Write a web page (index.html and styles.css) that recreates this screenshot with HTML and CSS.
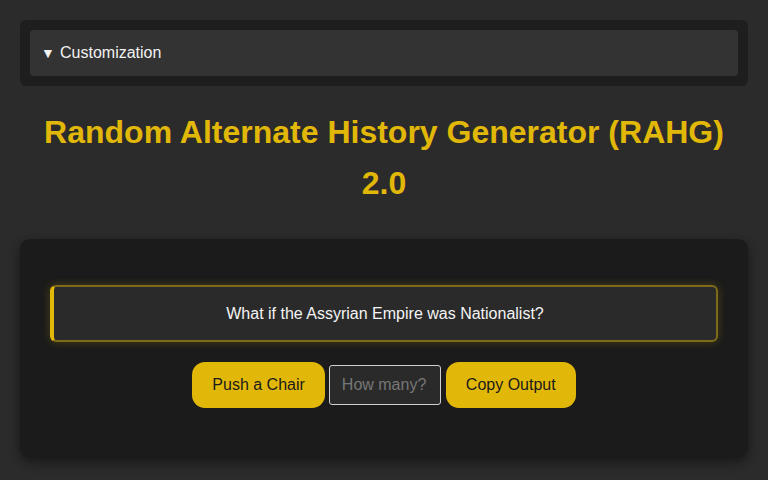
FILE: index.html
```html
<!DOCTYPE html>
<html>
<head>
<meta charset="utf-8">
<link rel="stylesheet" href="styles.css">
</head>
<body>
<details class="custom">
  <summary class="custom-summary">Customization</summary>
</details>
<h1 class="title">Random Alternate History Generator (RAHG) 2.0</h1>
<div class="card">
  <div class="output">What if the Assyrian Empire was Nationalist?</div>
  <div class="controls">
    <button class="btn">Push a Chair</button>
    <input class="count" type="text" placeholder="How many?">
    <button class="btn">Copy Output</button>
  </div>
</div>
</body>
</html>
```
FILE: styles.css
```css
html, body {
  margin: 0;
  padding: 0;
}
body {
  background: #2b2b2b;
  color: #f0f0f0;
  font-family: "Liberation Sans", Arial, sans-serif;
  font-size: 16px;
  padding: 20px;
}
.custom {
  background: #1e1e1e;
  border-radius: 6px;
  padding: 10px;
}
.custom-summary {
  background: #333333;
  border-radius: 4px;
  height: 46px;
  line-height: 46px;
  padding: 0 11px;
  cursor: pointer;
  list-style: none;
  color: #f2f2f2;
}
.custom-summary::-webkit-details-marker { display: none; }
.custom-summary::before {
  content: "\25BC";
  display: inline-block;
  width: 19px;
  font-size: 14px;
}
.title {
  color: #e2b808;
  text-align: center;
  font-size: 32px;
  font-weight: bold;
  line-height: 51px;
  margin: 21px 0 30px;
}
.card {
  background: #1b1b1b;
  border-radius: 10px;
  padding: 46px 30px 50px;
  box-shadow: 0 4px 12px rgba(0,0,0,0.45);
}
.output {
  background: #2a2a2a;
  border: 2px solid rgba(226,184,8,0.45);
  border-left: 4px solid #e2b808;
  border-radius: 6px;
  height: 53px;
  line-height: 53px;
  text-align: center;
  color: #f4f4f4;
  box-shadow: 0 0 8px rgba(226,184,8,0.25);
}
.controls {
  margin-top: 20px;
  display: flex;
  justify-content: center;
  align-items: center;
  gap: 4px;
}
.btn {
  background: #e2b808;
  color: #1a1a1a;
  border: none;
  border-radius: 13px;
  height: 46px;
  padding: 0 20px;
  font-family: "Liberation Sans", Arial, sans-serif;
  font-size: 16px;
  cursor: pointer;
}
.count {
  width: 112px;
  height: 40px;
  box-sizing: border-box;
  background: #2a2a2a;
  border: 1px solid #cfcfcf;
  border-radius: 3px;
  color: #f0f0f0;
  font-family: "Liberation Sans", Arial, sans-serif;
  font-size: 16px;
  padding: 0 12px;
  margin: 0 1px 0 0;
}
.count::placeholder { color: #777; }
```
